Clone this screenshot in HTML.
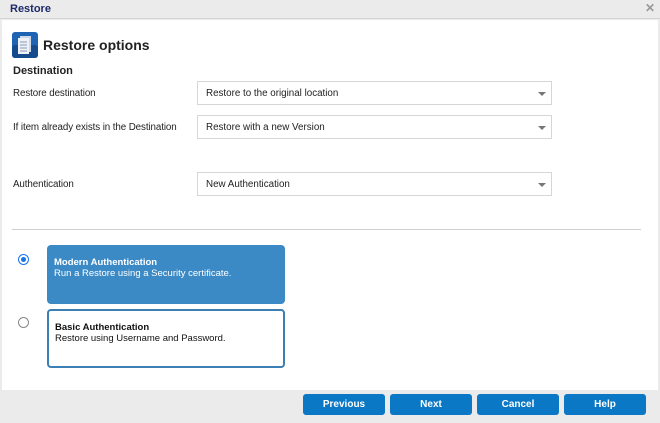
<!DOCTYPE html>
<html><head><style>
*{margin:0;padding:0;box-sizing:border-box}
body{width:660px;height:423px;background:#ebebeb;font-family:"Liberation Sans",Arial,sans-serif;position:relative;overflow:hidden;font-size:10px;color:#222}
.title{position:absolute;left:0;top:0;width:660px;height:19px;background:#ebebeb;border-bottom:1px solid #d4d4d4;color:#1c2a6b;font-weight:bold;font-size:11px;padding:3px 0 0 10px}
.x{position:absolute;right:5px;top:1px;color:#999;font-size:12px}
.main{position:absolute;left:2px;top:20px;width:656px;height:370px;background:#fff}
.a{position:absolute}
.lbl{position:absolute;font-size:9.8px;letter-spacing:-0.1px}
.sel{position:absolute;left:197px;width:355px;height:24px;border:1px solid #d6d6d6;padding:6px 0 0 8px;font-size:9.8px}
.sel:after{content:"";position:absolute;right:5px;top:10px;border-left:4px solid transparent;border-right:4px solid transparent;border-top:4px solid #777}
.card{position:absolute;left:47px;width:238px;height:59px;border-radius:4px;padding:12px 7px;font-size:9.5px;line-height:11px}
.radio{position:absolute;left:18px;width:11px;height:11px;border-radius:50%;border:1px solid #888;background:#fff}
.btn{position:absolute;top:394px;width:82px;height:21px;background:#0b78c5;border-radius:3px;color:#fff;font-weight:bold;font-size:10px;text-align:center;line-height:21px}
</style></head><body>
<div class="title">Restore<span class="x">✕</span></div>
<div class="main"></div>
<svg class="a" style="left:12px;top:32px" width="26" height="26"><rect x="0" y="0" width="26" height="26" rx="3" fill="#1f63b4"/><rect x="0" y="13" width="26" height="13" rx="3" fill="#154a8c"/><rect x="8" y="4" width="11" height="16" fill="#cfd8e6"/><rect x="6" y="6" width="11" height="16" fill="#eef2f8"/><path d="M8 10h7M8 13h7M8 16h7M8 19h7" stroke="#8a9bb5" stroke-width="1"/></svg>
<div class="a" style="left:43px;top:37px;font-size:14px;font-weight:bold">Restore options</div>
<div class="a" style="left:13px;top:65px;font-size:11px;font-weight:bold">Destination</div>
<div class="lbl" style="left:13px;top:88px">Restore destination</div>
<div class="lbl" style="left:13px;top:122px">If item already exists in the Destination</div>
<div class="lbl" style="left:13px;top:179px">Authentication</div>
<div class="sel" style="top:81px">Restore to the original location</div>
<div class="sel" style="top:115px">Restore with a new Version</div>
<div class="sel" style="top:172px">New Authentication</div>
<div class="a" style="left:12px;top:229px;width:629px;height:1px;background:#d0d0d0"></div>
<div class="radio" style="top:254px;border-color:#1a73e8"><div style="position:absolute;left:2px;top:2px;width:5px;height:5px;border-radius:50%;background:#1a73e8"></div></div>
<div class="radio" style="top:317px"></div>
<div class="card" style="top:245px;background:#3b8ac6;color:#fff"><b>Modern Authentication</b><br>Run a Restore using a Security certificate.</div>
<div class="card" style="top:309px;border:2px solid #3b7fb5;background:#fff;color:#111;padding:11px 6px"><b>Basic Authentication</b><br>Restore using Username and Password.</div>
<div class="btn" style="left:303px">Previous</div>
<div class="btn" style="left:390px">Next</div>
<div class="btn" style="left:477px">Cancel</div>
<div class="btn" style="left:564px">Help</div>
</body></html>
